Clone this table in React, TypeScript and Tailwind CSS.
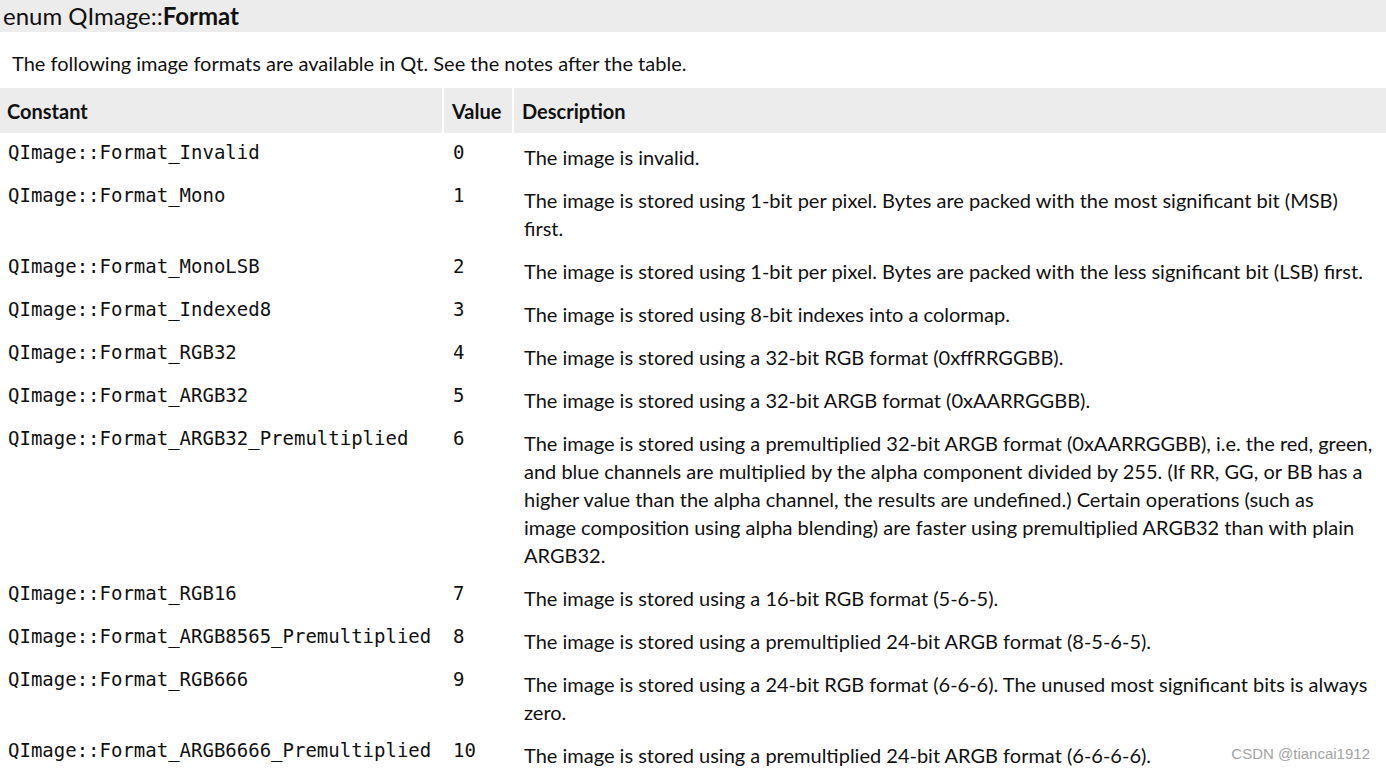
import type { ReactNode } from "react";

const rows: { name: string; value: string; desc: ReactNode }[] = [
  { name: "QImage::Format_Invalid", value: "0", desc: "The image is invalid." },
  {
    name: "QImage::Format_Mono",
    value: "1",
    desc: "The image is stored using 1-bit per pixel. Bytes are packed with the most significant bit (MSB) first.",
  },
  {
    name: "QImage::Format_MonoLSB",
    value: "2",
    desc: "The image is stored using 1-bit per pixel. Bytes are packed with the less significant bit (LSB) first.",
  },
  {
    name: "QImage::Format_Indexed8",
    value: "3",
    desc: "The image is stored using 8-bit indexes into a colormap.",
  },
  {
    name: "QImage::Format_RGB32",
    value: "4",
    desc: "The image is stored using a 32-bit RGB format (0xffRRGGBB).",
  },
  {
    name: "QImage::Format_ARGB32",
    value: "5",
    desc: "The image is stored using a 32-bit ARGB format (0xAARRGGBB).",
  },
  {
    name: "QImage::Format_ARGB32_Premultiplied",
    value: "6",
    desc: (
      <>
        The image is stored using a premultiplied 32-bit ARGB format (0xAARRGGBB), i.e. the red, green,
        and blue channels are multiplied by the alpha component divided by 255. (If RR, GG, or BB has a
        higher value than the alpha channel, the results are undefined.) Certain operations (such as
        <br />
        image composition using alpha blending) are faster using premultiplied ARGB32 than with plain
        ARGB32.
      </>
    ),
  },
  {
    name: "QImage::Format_RGB16",
    value: "7",
    desc: "The image is stored using a 16-bit RGB format (5-6-5).",
  },
  {
    name: "QImage::Format_ARGB8565_Premultiplied",
    value: "8",
    desc: "The image is stored using a premultiplied 24-bit ARGB format (8-5-6-5).",
  },
  {
    name: "QImage::Format_RGB666",
    value: "9",
    desc: "The image is stored using a 24-bit RGB format (6-6-6). The unused most significant bits is always zero.",
  },
  {
    name: "QImage::Format_ARGB6666_Premultiplied",
    value: "10",
    desc: "The image is stored using a premultiplied 24-bit ARGB format (6-6-6-6).",
  },
];

const sans = "font-['Lato',sans-serif]";
const mono = "font-['DejaVu_Sans_Mono',monospace] text-[19px] leading-[28px]";
const gridCols = "grid grid-cols-[442px_68px_872px] gap-x-[2px]";

export default function App() {
  return (
    <div className={`relative w-[1386px] h-[771px] overflow-hidden bg-white text-[#111] ${sans}`}>
      <div className="h-[32px] bg-[#ececec] pl-[3px] text-[24px] leading-[32px] text-[#111]">
        enum QImage::<span className="font-bold">Format</span>
      </div>

      <p className="h-[56px] pl-[12px] pt-[17px] text-[20px] leading-[28px]">
        The following image formats are available in Qt. See the notes after the table.
      </p>

      <div className={`${gridCols} h-[45px] text-[20px] font-bold`}>
        <div className="flex items-center bg-[#ececec] pl-[7px]">Constant</div>
        <div className="flex items-center bg-[#ececec] pl-[8px]">Value</div>
        <div className="flex items-center bg-[#ececec] pl-[8px]">Description</div>
      </div>

      {rows.map((r) => (
        <div key={r.name} className={gridCols}>
          <div className={`${mono} pl-[8px] pt-[5px]`}>{r.name}</div>
          <div className={`${mono} pl-[9px] pt-[5px]`}>{r.value}</div>
          <div className="pl-[10px] pr-[12px] pt-[10px] pb-[5px] text-[20px] leading-[28px]">
            {r.desc}
          </div>
        </div>
      ))}

      <div className="absolute right-[16px] bottom-[6px] font-['Liberation_Sans',sans-serif] text-[15px] text-[#a3a3a3]">
        CSDN @tiancai1912
      </div>
    </div>
  );
}
